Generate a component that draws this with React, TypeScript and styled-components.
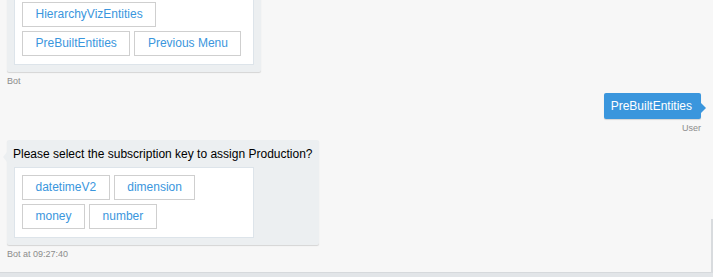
import React from 'react';
import styled, { createGlobalStyle } from 'styled-components';

const GlobalStyle = createGlobalStyle`
  html, body {
    margin: 0;
    padding: 0;
    background: #f7f7f7;
    font-family: 'Liberation Sans', Arial, sans-serif;
  }
`;

const Shell = styled.div`
  width: 713px;
  height: 277px;
  display: flex;
  flex-direction: column;
  position: relative;
  overflow: hidden;
  background: #f7f7f7;
`;

const MessageList = styled.div`
  flex: 1;
  min-height: 0;
  display: flex;
  flex-direction: column;
  justify-content: flex-end;
  overflow: hidden;
  padding: 0 12px 12px 7px;
`;

const ScrollThumb = styled.div`
  position: absolute;
  right: 0;
  top: 219px;
  bottom: 4px;
  width: 2px;
  background: #d8dbde;
`;

const InputBar = styled.div`
  height: 4px;
  flex: none;
  background: #e2e5e8;
  border-top: 1px solid #d6d9dc;
`;

const Group = styled.div<{ $fromMe?: boolean }>`
  display: flex;
  flex-direction: column;
  align-items: ${({ $fromMe }) => ($fromMe ? 'flex-end' : 'flex-start')};
  margin-top: 6px;
`;

const Bubble = styled.div<{ $fromMe?: boolean }>`
  position: relative;
  border-radius: 2px;
  box-shadow: 0 1px 1px rgba(0, 0, 0, 0.14);
  font-size: 12px;
  line-height: 14px;
  background: ${({ $fromMe }) => ($fromMe ? '#3a96dd' : '#eceff1')};
  color: ${({ $fromMe }) => ($fromMe ? '#fff' : '#000')};
  padding: ${({ $fromMe }) => ($fromMe ? '6px 9px 6px 7px' : '7px 6px 7px 6px')};

  &::after {
    content: '';
    position: absolute;
    top: ${({ $fromMe }) => ($fromMe ? '10px' : '12px')};
    ${({ $fromMe }) => ($fromMe ? 'right: -5px;' : 'left: -4px;')}
    border-top: 5px solid transparent;
    border-bottom: 5px solid transparent;
    ${({ $fromMe }) =>
      $fromMe ? 'border-left: 5px solid #3a96dd;' : 'border-right: 4px solid #eceff1;'}
  }
`;

const Text = styled.div`
  white-space: nowrap;
`;

const Card = styled.div`
  width: 240px;
  box-sizing: border-box;
  margin: 6px 1px 0 1px;
  padding: 7px 7px 8px;
  background: #fff;
  border: 1px solid #dde4ea;
  display: flex;
  flex-wrap: wrap;
  gap: 4px;
`;

const CardButton = styled.button`
  height: 25px;
  box-sizing: border-box;
  padding: 0 12.5px;
  border: 1px solid #cfcfcf;
  background: transparent;
  color: #3a96dd;
  font-family: 'Liberation Sans', Arial, sans-serif;
  font-size: 12px;
  line-height: 23px;
  white-space: nowrap;
  cursor: pointer;
`;

const From = styled.div`
  margin-top: 3px;
  font-size: 9px;
  line-height: 12px;
  color: #8c8c8c;
`;

type Msg = {
  fromMe?: boolean;
  text?: string;
  buttons?: string[];
  from: string;
};

const messages: Msg[] = [
  {
    text: 'Please select the entity type:',
    buttons: ['HierarchyVizEntities', 'PreBuiltEntities', 'Previous Menu'],
    from: 'Bot',
  },
  { fromMe: true, text: 'PreBuiltEntities', from: 'User' },
  {
    text: 'Please select the subscription key to assign Production?',
    buttons: ['datetimeV2', 'dimension', 'money', 'number'],
    from: 'Bot at 09:27:40',
  },
];

export default function App() {
  return (
    <>
      <GlobalStyle />
      <Shell>
        <MessageList>
          {messages.map((m, i) => (
            <Group key={i} $fromMe={m.fromMe}>
              <Bubble $fromMe={m.fromMe}>
                {m.text && <Text>{m.text}</Text>}
                {m.buttons && (
                  <Card>
                    {m.buttons.map(b => (
                      <CardButton key={b}>{b}</CardButton>
                    ))}
                  </Card>
                )}
              </Bubble>
              <From>{m.from}</From>
            </Group>
          ))}
        </MessageList>
        <ScrollThumb />
        <InputBar />
      </Shell>
    </>
  );
}
